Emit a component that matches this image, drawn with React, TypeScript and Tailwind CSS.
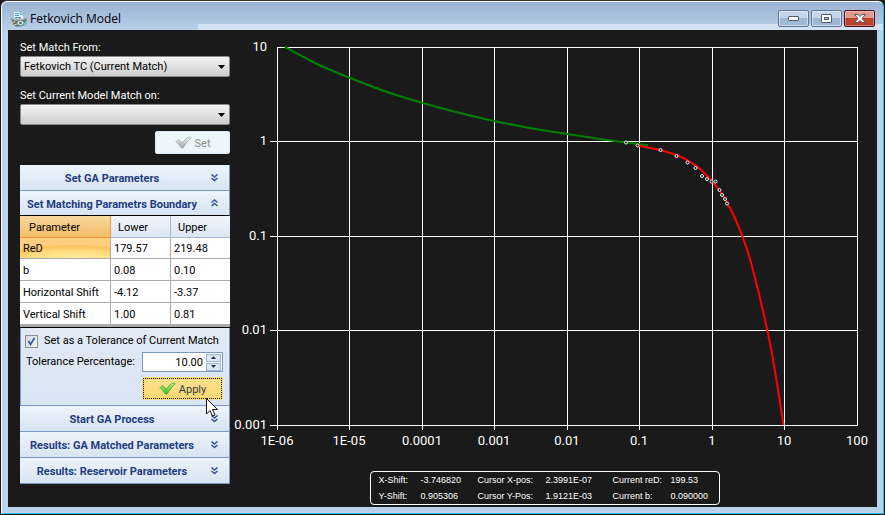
import { useState, type ReactNode } from 'react';

type Point = [number, number];

const X_TICKS: { x: number; label: string }[] = [
  { x: 277, label: '1E-06' },
  { x: 349, label: '1E-05' },
  { x: 422, label: '0.0001' },
  { x: 494, label: '0.001' },
  { x: 567, label: '0.01' },
  { x: 639, label: '0.1' },
  { x: 712, label: '1' },
  { x: 784, label: '10' },
  { x: 857, label: '100' },
];

const Y_TICKS: { y: number; label: string }[] = [
  { y: 47, label: '10' },
  { y: 141, label: '1' },
  { y: 236, label: '0.1' },
  { y: 330, label: '0.01' },
  { y: 425, label: '0.001' },
];

const TRANSIENT: Point[] = [
  [285, 47], [316, 63.5], [349, 77.5], [385, 91.2], [422, 102.8], [458, 112.5],
  [494, 121], [530, 128], [567, 134], [600, 139], [626, 142.5], [648, 145.3],
];

const DEPLETION: Point[] = [
  [637, 145.5], [660, 150], [677, 155.3], [689, 161.2], [701, 169.8], [712, 181.2], [720.5, 192],
  [728.5, 205], [735.5, 219.5], [743, 238], [751.5, 264.5], [767.5, 331], [775.8, 376], [783.5, 425],
];

const SAMPLES: Point[] = [
  [626, 142.5], [637.5, 145.5], [660.5, 150], [676.5, 156], [687.5, 162.5], [695.5, 168],
  [702, 176], [707, 179], [711.5, 181.5], [715.5, 181.5], [719.5, 190], [722, 195],
  [725, 199], [727, 203.5],
];

const ROWS = [
  { name: 'b', lower: '0.08', upper: '0.10' },
  { name: 'Horizontal Shift', lower: '-4.12', upper: '-3.37' },
  { name: 'Vertical Shift', lower: '1.00', upper: '0.81' },
];

const READOUT = [
  ['X-Shift:', '-3.746820', 'Cursor X-pos:', '2.3991E-07', 'Current reD:', '199.53'],
  ['Y-Shift:', '0.905306', 'Cursor Y-Pos:', '1.9121E-03', 'Current b:', '0.090000'],
];

// Catmull-Rom through the points, written as cubic segments
function smoothPath(pts: Point[]) {
  let d = `M${pts[0][0]} ${pts[0][1]}`;
  for (let i = 0; i < pts.length - 1; i++) {
    const p0 = pts[i - 1] ?? pts[i];
    const p1 = pts[i];
    const p2 = pts[i + 1];
    const p3 = pts[i + 2] ?? p2;
    d += ` C${p1[0] + (p2[0] - p0[0]) / 6} ${p1[1] + (p2[1] - p0[1]) / 6}`;
    d += ` ${p2[0] - (p3[0] - p1[0]) / 6} ${p2[1] - (p3[1] - p1[1]) / 6} ${p2[0]} ${p2[1]}`;
  }
  return d;
}

function AppIcon() {
  return (
    <svg width="16" height="16" viewBox="0 0 16 16" aria-hidden="true">
      <path d="M2.500 7V0.500H9L12.500 3.500V8" fill="#eaf7fc" stroke="#8ec6dd" strokeWidth="0.8" />
      <path d="M4 2.500h4M4 4.500h4M4 6.500h6" stroke="#3a9fc6" />
      <path d="M9 0.500v3h3.500" fill="#bfe2ef" stroke="#5aa7c4" strokeWidth="0.8" />
      <path d="M0 7l3 2.500h8l4.500-2v2.500l-2 1.500-1 3-3 1H5l-3-2z" fill="#66716a" />
      <path d="M0.500 7.500L3 9.500M5 7.500l1.500 2M8 8l2-1M12 9l3.500-2" stroke="#b98343" fill="none" />
      <path d="M1 12l3-1.500M3 14l3-1" stroke="#d9d3bb" fill="none" />
      <ellipse cx="9.500" cy="12" rx="3.500" ry="2.500" fill="#f4f1dc" stroke="#2b8a86" strokeWidth="0.8" />
      <circle cx="9.500" cy="12" r="1.300" fill="#2b6f78" />
      <path d="M13.500 9.500l1.500 1v2l-1.500 2" stroke="#3aa3a8" fill="none" />
    </svg>
  );
}

function Tick({ muted = false }: { muted?: boolean }) {
  const id = muted ? 'tick-muted' : 'tick-green';
  return (
    <svg width="17" height="14" viewBox="0 0 17 14" aria-hidden="true">
      <defs>
        <linearGradient id={id} x1="0" y1="0" x2="0" y2="1">
          <stop offset="0" stopColor={muted ? '#f4f4f4' : '#b4f58c'} />
          <stop offset="1" stopColor={muted ? '#a2a2a2' : '#35b822'} />
        </linearGradient>
      </defs>
      <path
        d="M1 5.500C2 4.200 3.500 3.500 4.500 4.300L7 7.200C9 4.500 11.500 2 14.500 1C15.500 0.800 16.300 1.500 15.800 2.300C13 4.500 10.500 8 8.500 11.500C8 12.500 6.500 12.500 6 11.500C4.500 9.500 3 7.500 1 5.500Z"
        fill={`url(#${id})`}
        stroke={muted ? '#a0a3a6' : '#43a22c'}
        strokeWidth="0.8"
      />
    </svg>
  );
}

function Chevrons({ up = false }: { up?: boolean }) {
  return (
    <svg width="7" height="8" viewBox="0 0 7 8" fill="none" stroke="#3c5794" strokeWidth="1.600" aria-hidden="true">
      {up ? <path d="M0.500 3.500L3.500 1L6.500 3.500M0.500 7L3.500 4.500L6.500 7" /> : <path d="M0.500 0.500L3.500 3L6.500 0.500M0.500 4L3.500 6.500L6.500 4" />}
    </svg>
  );
}

function Section({ title, open = false, children }: { title: string; open?: boolean; children?: ReactNode }) {
  return (
    <section>
      <button
        type="button"
        aria-expanded={open}
        className={`${open ? 'h-[25px] border-b-black' : 'h-[26px] border-b-[#7b98c4]'} flex w-full items-center gap-[7px] border-r border-b border-r-[#7b98c4] bg-linear-to-b from-[#edf4fc] to-[#d8e4f2] pr-[11px] text-[11px] font-bold text-[#1e3c82]`}
      >
        <span className="flex-1 pt-1 text-center whitespace-nowrap">{title}</span>
        <Chevrons up={open} />
      </button>
      {children}
    </section>
  );
}

function Dropdown({ id, label, value }: { id: string; label: string; value: string }) {
  return (
    <div>
      <label htmlFor={id} className="block h-[18px] leading-5 text-white">{label}</label>
      <div className="relative">
        <select
          id={id}
          defaultValue={value}
          className="block h-[21px] w-full appearance-none rounded-xs border border-[#8a8a8a] bg-linear-to-b from-[#f3f3f3] to-[#cecece] px-[3px] pt-[2px] text-black"
        >
          <option value={value}>{value}</option>
        </select>
        <svg className="pointer-events-none absolute top-[9px] right-[5px]" width="7" height="4" viewBox="0 0 7 4" aria-hidden="true">
          <path d="M0 0h7L3.500 4z" fill="#000" />
        </svg>
      </div>
    </div>
  );
}

function ParameterTable() {
  return (
    <table className="w-full table-fixed border-separate border-spacing-0 border-b-[3px] border-[#ababab] bg-white text-left leading-4">
      <colgroup>
        <col className="w-[91px]" />
        <col className="w-[60px]" />
        <col />
      </colgroup>
      <thead>
        <tr className="h-[22px]">
          <th className="border-r border-b border-[#f09a3c] bg-linear-to-b from-[#f8d7a0] to-[#f3bd63] px-[9px] pt-[2px] pb-0 font-normal">Parameter</th>
          <th className="border-r border-b border-[#9eb6ce] bg-linear-to-b from-[#f0f5fc] to-[#dce7f4] px-[7px] pt-[2px] pb-0 font-normal">Lower</th>
          <th className="border-b border-[#9eb6ce] bg-linear-to-b from-[#f0f5fc] to-[#dce7f4] px-[7px] pt-[2px] pb-0 font-normal">Upper</th>
        </tr>
      </thead>
      <tbody className="[&_td]:border-[#ababab] [&_td]:px-[3px] [&_td]:pt-[2px] [&_td]:pb-0 [&_td:not(:last-child)]:border-r [&_tr:not(:last-child)>td]:border-b">
        <tr className="h-[21px]">
          <td className="bg-[radial-gradient(ellipse_90%_80%_at_60%_110%,#fff0a4,#ffdb7c_60%,#ffc35c_85%,#ffce80)]">ReD</td>
          <td>179.57</td>
          <td>219.48</td>
        </tr>
        {ROWS.map((row) => (
          <tr key={row.name} className="h-[22px] last:h-[21px]">
            <td>{row.name}</td>
            <td>{row.lower}</td>
            <td>{row.upper}</td>
          </tr>
        ))}
      </tbody>
    </table>
  );
}

function TolerancePanel() {
  const [checked, setChecked] = useState(true);
  const [value, setValue] = useState('10.00');
  const step = (by: number) => setValue((Number(value) + by).toFixed(2));

  return (
    <div className="relative border-x border-b border-[#7b98c4] bg-linear-to-b from-[#e1eaf5] to-[#d9e5f3] pt-[5px] pr-[6px] pb-[5px] pl-1">
      <div className="flex h-4 items-center gap-[6px]">
        <span className="relative flex">
          <input
            id="tolerance"
            type="checkbox"
            checked={checked}
            onChange={(e) => setChecked(e.target.checked)}
            className="peer size-[13px] appearance-none border border-[#8e8f8f] bg-linear-to-br from-[#cfd6de] to-[#f6f7f8]"
          />
          <svg className="pointer-events-none absolute inset-0 hidden peer-checked:block" width="13" height="13" viewBox="0 0 13 13" aria-hidden="true">
            <path d="M3.500 6L5.500 9.500L9.500 3" fill="none" stroke="#3f5b9c" strokeWidth="1.800" />
          </svg>
        </span>
        <label htmlFor="tolerance" className="pt-px whitespace-nowrap">Set as a Tolerance of Current Match</label>
      </div>
      <div className="mt-[3px] flex items-center">
        <label htmlFor="percentage" className="flex-1 pl-px whitespace-nowrap">Tolerance Percentage:</label>
        <div className="flex h-5 w-[81px] items-center border border-[#7b98c4] bg-white pr-px">
          <input
            id="percentage"
            value={value}
            onChange={(e) => setValue(e.target.value)}
            className="h-full w-0 flex-1 pr-[3px] text-right outline-none"
          />
          <div className="flex flex-col gap-px">
            <button type="button" aria-label="Increase" onClick={() => step(1)} className="flex h-2 w-[15px] items-center justify-center border border-[#9db4d4] bg-[#dbe7f5]">
              <svg width="5" height="3" viewBox="0 0 5 3" aria-hidden="true"><path d="M0 3h5L2.500 0z" fill="#1f2f55" /></svg>
            </button>
            <button type="button" aria-label="Decrease" onClick={() => step(-1)} className="flex h-2 w-[15px] items-center justify-center border border-[#9db4d4] bg-[#dbe7f5]">
              <svg width="5" height="3" viewBox="0 0 5 3" aria-hidden="true"><path d="M0 0h5L2.500 3z" fill="#1f2f55" /></svg>
            </button>
          </div>
        </div>
      </div>
      <div className="mt-[5px] flex justify-end">
        <button type="button" className="h-[23px] w-[81px] rounded-xs bg-[#fbdc80] p-px text-[#333b4c]">
          <span className="flex h-full items-center justify-center gap-[3px] border border-dotted border-black bg-linear-to-b from-[#fbe08e] to-[#f9d873]">
            <Tick />
            <span className="pt-[3px]">Apply</span>
          </span>
        </button>
      </div>
      <svg className="pointer-events-none absolute right-[11px] -bottom-3 z-10" width="12" height="19" viewBox="0 0 12 19" aria-hidden="true">
        <path d="M0.500 0.500V16L4 12.500L6.500 18L9 17L6.500 11.500H11.500Z" fill="#fff" stroke="#111" />
      </svg>
    </div>
  );
}

function TypeCurveChart() {
  return (
    <svg viewBox="230 30 647 430" className="block w-full" role="img" aria-label="Fetkovich type curve">
      <g stroke="#fff" shapeRendering="crispEdges">
        {X_TICKS.map(({ x }) => (
          <path key={x} d={`M${x + 0.5} 47V${x === 857 ? 426 : 430}`} />
        ))}
        {Y_TICKS.map(({ y }) => (
          <path key={y} d={`M${y === 47 ? 277 : 270} ${y + 0.5}H858`} />
        ))}
      </g>
      <g className="font-['Roboto',sans-serif] text-[13px]" fill="#fff">
        {X_TICKS.map(({ x, label }) => (
          <text key={x} x={x} y="445" textAnchor="middle">{label}</text>
        ))}
        {Y_TICKS.map(({ y, label }) => (
          <text key={y} x="267" y={y + 4} textAnchor="end">{label}</text>
        ))}
      </g>
      <path d={smoothPath(TRANSIENT)} fill="none" stroke="#008000" strokeWidth="2" />
      <path d={smoothPath(DEPLETION)} fill="none" stroke="#f00" strokeWidth="2" />
      <g fill="#1a1a1a" stroke="#eee">
        {SAMPLES.map(([x, y]) => (
          <circle key={x} cx={x} cy={y} r="1.500" />
        ))}
      </g>
    </svg>
  );
}

function Readout() {
  return (
    <dl className="mt-[11px] mr-[18px] grid grid-cols-[42px_57px_68px_67px_58px_40px] self-center rounded-sm border border-white px-2 font-['Liberation_Sans',sans-serif] text-[9px] leading-4 whitespace-nowrap text-white">
      {READOUT.flat().map((text, i) => (i % 2 === 0 ? <dt key={text}>{text}</dt> : <dd key={text}>{text}</dd>))}
    </dl>
  );
}

function TitleBar() {
  const blue = 'flex h-[17px] w-[31px] items-center justify-center rounded-xs border border-[#5d7694] bg-linear-to-b from-[#c3d5ea] from-50% to-[#9db7d5] to-50% inset-ring inset-ring-white/50';
  return (
    <header className="relative flex h-7 items-center pr-[2px] pl-[9px]">
      <div className="absolute right-0 bottom-0 left-[196px] h-[6px] bg-[#d3e1f1]" />
      <div className="relative flex flex-1 items-center gap-[3px] pt-[6px]">
        <AppIcon />
        <h1 className="font-['Open_Sans',sans-serif] text-xs leading-4 text-black">Fetkovich Model</h1>
      </div>
      <div className="relative flex gap-[2px] pt-[5px] pr-[6px]">
        <button type="button" aria-label="Minimize" className={blue}>
          <svg width="11" height="5" viewBox="0 0 11 5" aria-hidden="true"><rect x="0.500" y="0.500" width="10" height="4" rx="0.500" fill="#fff" stroke="#535d6e" /></svg>
        </button>
        <button type="button" aria-label="Maximize" className={blue}>
          <svg width="11" height="9" viewBox="0 0 11 9" aria-hidden="true">
            <rect x="0.500" y="0.500" width="10" height="8" rx="0.500" fill="#fff" stroke="#535d6e" />
            <rect x="3.500" y="3.500" width="4" height="2" fill="#a9bfd9" stroke="#535d6e" />
          </svg>
        </button>
        <button type="button" aria-label="Close" className="flex h-[17px] w-[31px] items-center justify-center rounded-xs border border-[#4a1420] bg-linear-to-b from-[#e09a8c] from-50% to-[#bd4029] to-50% inset-ring inset-ring-white/30">
          <svg width="12" height="9" viewBox="0 0 12 9" aria-hidden="true">
            <path d="M0.500 0.500H4L6 2.500L8 0.500H11.500L8 4.500L11.500 8.500H8L6 6.500L4 8.500H0.500L4 4.500Z" fill="#fff" stroke="#535666" />
          </svg>
        </button>
      </div>
    </header>
  );
}

export default function App() {
  return (
    <div className="min-h-screen bg-[#1a1a1a] px-px pb-px font-['Roboto',sans-serif] text-[11px] text-black">
      <div className="rounded-t-md border-t border-[#3b3537]">
        <main className="rounded-t-md border border-t-white border-r-[#27c3ea] border-b-[#27c3ea] border-l-white bg-[#bad1eb] bg-[linear-gradient(#9ab3d3,#bad1eb_30px)]">
          <TitleBar />
          <div className="mx-[6px] mb-[6px] flex bg-[#1a1a1a]">
            <aside className="w-[222px] shrink-0 pt-2 pb-[23px] pl-3">
              <Dropdown id="match-from" label="Set Match From:" value="Fetkovich TC (Current Match)" />
              <div className="mt-[9px]">
                <Dropdown id="match-on" label="Set Current Model Match on:" value="" />
              </div>
              <div className="mt-[6px] flex justify-end">
                <button type="button" disabled className="flex h-[23px] w-[75px] items-center justify-center gap-[3px] rounded-xs border border-[#dde7f2] bg-[#edf5fd] text-[#8d8d8d]">
                  <Tick muted />
                  <span className="pt-[3px]">Set</span>
                </button>
              </div>
              <div className="mt-[11px]">
                <Section title="Set GA Parameters" />
                <Section title="Set Matching Parametrs Boundary" open>
                  <ParameterTable />
                  <div className="h-px bg-black" />
                  <TolerancePanel />
                </Section>
                <Section title="Start GA Process" />
                <Section title="Results: GA Matched Parameters" />
                <Section title="Results: Reservoir Parameters" />
              </div>
            </aside>
            <div className="flex min-w-0 flex-1 flex-col">
              <TypeCurveChart />
              <Readout />
            </div>
          </div>
        </main>
      </div>
    </div>
  );
}
